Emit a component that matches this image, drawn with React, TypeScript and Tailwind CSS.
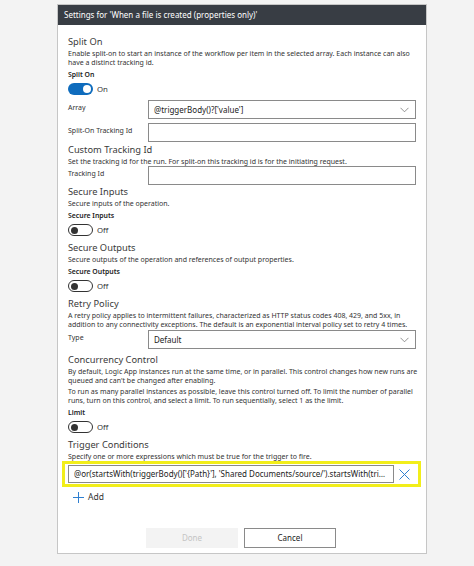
import React from "react";

const font = { fontFamily: '"Noto Sans", "Open Sans", sans-serif' };

const COND =
  "@or(startsWith(triggerBody()['{Path}'], 'Shared Documents/source/').startsWith(triggerBody()['{Path}'], 'Shared Documents/dest/'))";

function Heading({ children, mt }: { children: React.ReactNode; mt: string }) {
  return <div className={`h-[14px] text-[9.3px] leading-[14px] text-[#3a3a3a] ${mt}`}>{children}</div>;
}

function Desc({ children, wide }: { children: React.ReactNode; wide?: boolean }) {
  return (
    <div className={`${wide ? "-mr-[12px]" : "-mr-[4px]"} text-[7px] leading-[9px] text-[#333]`}>{children}</div>
  );
}

function Label({ children }: { children: React.ReactNode }) {
  return <div className="mt-[3px] h-[9px] text-[6.9px] leading-[9px] font-semibold text-[#222]">{children}</div>;
}

function Toggle({ on }: { on: boolean }) {
  return (
    <div className="mt-[4px] flex h-[12px] items-center gap-[4px] leading-[12px]">
      {on ? (
        <div className="flex h-[12px] w-[25px] items-center justify-end rounded-full bg-[#0f6cbd] pr-[2px]">
          <div className="h-[8px] w-[8px] rounded-full bg-white" />
        </div>
      ) : (
        <div className="flex h-[12px] w-[25px] items-center rounded-full border border-[#333] bg-white pl-[2px]">
          <div className="h-[7px] w-[7px] rounded-full bg-[#333]" />
        </div>
      )}
      <span className="text-[7.8px] leading-[12px] text-[#333]">{on ? "On" : "Off"}</span>
    </div>
  );
}

function Chevron() {
  return (
    <svg width="9" height="6" viewBox="0 0 9 6" className="shrink-0">
      <path d="M0.5 0.8 L4.5 4.8 L8.5 0.8" fill="none" stroke="#777" strokeWidth="0.8" />
    </svg>
  );
}

function Row({
  label,
  value,
  select,
  mt,
}: {
  label: string;
  value?: string;
  select?: boolean;
  mt: string;
}) {
  return (
    <div className={`flex h-[19px] items-start ${mt}`}>
      <div className="w-[80px] shrink-0 pt-[3px] text-[7px] leading-[9px] text-[#333]">{label}</div>
      <div className="flex h-[19px] flex-1 items-center justify-between border border-[#8a8a8a] bg-white pl-[5px] pr-[6px]">
        <span className="text-[8px] leading-[12px] text-[#222]">{value}</span>
        {select && <Chevron />}
      </div>
    </div>
  );
}

export default function App() {
  return (
    <div className="h-[566px] w-[474px] bg-[#f3f3f3] pl-[57px] pt-[4px]" style={font}>
      <div className="flex h-[550px] w-[370px] flex-col border border-[#c6c6c6] bg-white">
        <div className="flex h-[20px] shrink-0 items-center bg-[#383d44] pl-[6px] text-[8px] text-white">
          Settings for 'When a file is created (properties only)'
        </div>
        <div className="flex flex-1 flex-col pl-[10px] pr-[10px]">
          <Heading mt="mt-[10px]">Split On</Heading>
          <Desc>
            Enable split-on to start an instance of the workflow per item in the selected array. Each instance can also
            have a distinct tracking id.
          </Desc>
          <Label>Split On</Label>
          <Toggle on />
          <Row mt="mt-[5px]" label="Array" value="@triggerBody()?['value']" select />
          <Row mt="mt-[4px]" label="Split-On Tracking Id" />
          <Heading mt="mt-[1px]">Custom Tracking Id</Heading>
          <Desc>Set the tracking id for the run. For split-on this tracking id is for the initiating request.</Desc>
          <Row mt="mt-[0px]" label="Tracking Id" />
          <Heading mt="mt-[0px]">Secure Inputs</Heading>
          <Desc>Secure inputs of the operation.</Desc>
          <Label>Secure Inputs</Label>
          <Toggle on={false} />
          <Heading mt="mt-[5px]">Secure Outputs</Heading>
          <Desc>Secure outputs of the operation and references of output properties.</Desc>
          <Label>Secure Outputs</Label>
          <Toggle on={false} />
          <Heading mt="mt-[5px]">Retry Policy</Heading>
          <Desc>
            A retry policy applies to intermittent failures, characterized as HTTP status codes 408, 429, and 5xx, in
            addition to any connectivity exceptions. The default is an exponential interval policy set to retry 4 times.
          </Desc>
          <Row mt="mt-[1px]" label="Type" value="Default" select />
          <Heading mt="mt-[4px]">Concurrency Control</Heading>
          <Desc wide>
            By default, Logic App instances run at the same time, or in parallel. This control changes how new runs are
            queued and can't be changed after enabling.
          </Desc>
          <div className="mt-[2px]">
            <Desc>
              To run as many parallel instances as possible, leave this control turned off. To limit the number of
              parallel runs, turn on this control, and select a limit. To run sequentially, select 1 as the limit.
            </Desc>
          </div>
          <Label>Limit</Label>
          <Toggle on={false} />
          <Heading mt="mt-[5px]">Trigger Conditions</Heading>
          <Desc>Specify one or more expressions which must be true for the trigger to fire.</Desc>
          <div className="-ml-[6px] -mr-[5px] flex h-[26px] shrink-0 items-center border-[3px] border-[#f2ee1a] pl-[3px] pr-[4px]">
            <div className="flex h-[18px] min-w-0 flex-1 items-center border border-[#8a8a8a] bg-white px-[5px]">
              <span className="truncate text-[8px] leading-[12px] text-[#222]">{COND}</span>
            </div>
            <div className="flex w-[20px] justify-center">
              <svg width="11" height="11" viewBox="0 0 11 11">
                <path d="M0.5 0.5 L10.5 10.5 M10.5 0.5 L0.5 10.5" stroke="#2f7fd0" strokeWidth="1" fill="none" />
              </svg>
            </div>
          </div>
          <div className="mt-[4px] flex h-[12px] items-center gap-[4px] pl-[5px]">
            <svg width="11" height="11" viewBox="0 0 11 11">
              <path d="M5.5 0 V11 M0 5.5 H11" stroke="#2f7fd0" strokeWidth="1" fill="none" />
            </svg>
            <span className="text-[8.5px] leading-[12px] text-[#333]">Add</span>
          </div>
          <div className="mt-[25px] flex justify-center gap-[6px] pr-[2px]">
            <div className="flex h-[20px] w-[92px] items-center justify-center bg-[#f3f3f3] text-[8px] text-[#c4c4c4]">
              Done
            </div>
            <div className="flex h-[20px] w-[92px] items-center justify-center border border-[#8a8a8a] bg-white text-[8px] text-[#222]">
              Cancel
            </div>
          </div>
        </div>
      </div>
    </div>
  );
}
